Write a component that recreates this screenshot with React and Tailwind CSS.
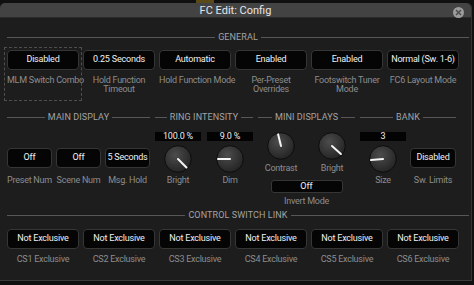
import React from "react";

const lbl = "text-[9px] leading-[9px] text-[#8d8d8d] text-center whitespace-nowrap tracking-[-0.25px]";
const btn =
    "h-[20px] flex items-center justify-center rounded-[4px] bg-[#050505] border border-[#363636] text-[9px] text-[#f2f2f2] whitespace-nowrap tracking-[-0.2px]";

const Header = ({ title, className = "" }) => (
    <div className={"flex items-center gap-[3px] h-[10px] " + className}>
        <div className="flex-1 h-px bg-[#575757]" />
        <span className="text-[9px] leading-[10px] text-[#a3a3a3] tracking-[0.1px]">{title}</span>
        <div className="flex-1 h-px bg-[#575757]" />
    </div>
);

const Knob = ({ angle }) => {
    const a = (angle * Math.PI) / 180;
    const x2 = 14 + Math.sin(a) * 12;
    const y2 = 14 - Math.cos(a) * 12;
    return (
        <svg width="28" height="28" viewBox="0 0 28 28">
            <defs>
                <radialGradient id="kg" cx="40%" cy="35%" r="70%">
                    <stop offset="0%" stopColor="#4c4c4c" />
                    <stop offset="100%" stopColor="#222" />
                </radialGradient>
            </defs>
            <circle cx="14" cy="14" r="13.3" fill="url(#kg)" stroke="#0d0d0d" strokeWidth="1" />
            <line x1="14" y1="14" x2={x2} y2={y2} stroke="#f4f4f4" strokeWidth="2" strokeLinecap="round" />
        </svg>
    );
};

const Value = ({ v }) => (
    <div className="h-[9px] w-full bg-[#030303] text-[9px] leading-[9px] text-[#f0f0f0] text-center tracking-[-0.2px]">{v}</div>
);

const KnobCol = ({ value, angle, label }) => (
    <div className="flex flex-col items-center w-[46px]">
        {value !== undefined && <Value v={value} />}
        <div className={value !== undefined ? "mt-[4px]" : ""}>
            <Knob angle={angle} />
        </div>
        <div className={lbl + (value !== undefined ? " mt-[3px]" : " mt-[4px]")}>{label}</div>
    </div>
);

const general = [
    ["Disabled", ["MLM Switch Combo"]],
    ["0.25 Seconds", ["Hold Function", "Timeout"]],
    ["Automatic", ["Hold Function Mode"]],
    ["Enabled", ["Per-Preset", "Overrides"]],
    ["Enabled", ["Footswitch Tuner", "Mode"]],
    ["Normal (Sw. 1-6)", ["FC6 Layout Mode"]],
];

const App = () => {
    return (
        <div className="w-[474px] h-[285px] bg-[#101010] overflow-hidden font-[family-name:Roboto,sans-serif]">
            <div className="h-[3px] flex">
                <div className="ml-[196px] w-[18px] bg-[#5a4a1a]" />
            </div>
            <div className="w-[472px] h-[277px] flex flex-col bg-[#1d1d1d] rounded-t-[5px] border-r border-[#333]">
                <div className="h-[15px] relative flex items-center justify-center bg-[#434343] rounded-t-[5px] border-b border-[#2a2a2a]">
                    <span className="text-[11px] text-[#e6e6e6] leading-[15px]">FC Edit: Config</span>
                    <div className="absolute right-[7px] top-[4px] w-[11px] h-[11px] rounded-full bg-[#9c9c9c] flex items-center justify-center">
                        <svg width="7" height="7" viewBox="0 0 7 7">
                            <path d="M1 1L6 6M6 1L1 6" stroke="#4a4a4a" strokeWidth="1.4" />
                        </svg>
                    </div>
                </div>

                <div className="px-[7px] pt-[14px]">
                    <Header title="GENERAL" className="mr-[-5px]" />
                    <div className="grid grid-cols-6 gap-[4px] mt-[8px] w-[452px]">
                        {general.map(([v, l], i) => (
                            <div
                                key={i}
                                className={
                                    "flex flex-col h-[48px] " +
                                    (i === 0 ? "outline outline-1 outline-dashed outline-[#4e4e4e] outline-offset-[2px]" : "")
                                }
                            >
                                <div className={btn}>{v}</div>
                                <div className="mt-[6px] flex flex-col">
                                    {l.map((t, j) => (
                                        <div key={j} className={lbl}>
                                            {t}
                                        </div>
                                    ))}
                                </div>
                            </div>
                        ))}
                    </div>

                    <div className="flex gap-[5px] mt-[14px] h-[98px]">
                        <div className="w-[143px] flex flex-col">
                            <Header title="MAIN DISPLAY" />
                            <div className="flex gap-[4px] mt-[26px]">
                                {[
                                    ["Off", "Preset Num"],
                                    ["Off", "Scene Num"],
                                    ["5 Seconds", "Msg. Hold"],
                                ].map(([v, l], i) => (
                                    <div key={i} className="flex-1 flex flex-col">
                                        <div className={btn}>{v}</div>
                                        <div className={lbl + " mt-[8px]"}>{l}</div>
                                    </div>
                                ))}
                            </div>
                        </div>

                        <div className="w-[98px] flex flex-col">
                            <Header title="RING INTENSITY" />
                            <div className="flex gap-[6px] mt-[10px]">
                                <KnobCol value="100.0 %" angle={135} label="Bright" />
                                <KnobCol value="9.0 %" angle={270} label="Dim" />
                            </div>
                        </div>

                        <div className="w-[97px] flex flex-col">
                            <Header title="MINI DISPLAYS" />
                            <div className="flex gap-[5px] mt-[10px]">
                                <KnobCol angle={-14} label="Contrast" />
                                <KnobCol angle={132} label="Bright" />
                            </div>
                            <div className="flex flex-col items-center mt-[7px]">
                                <div className="w-[72px] h-[13px] rounded-[3px] bg-[#050505] border border-[#363636] text-[9px] leading-[11px] text-[#f2f2f2] text-center">
                                    Off
                                </div>
                                <div className={lbl + " mt-[4px]"}>Invert Mode</div>
                            </div>
                        </div>

                        <div className="w-[96px] flex flex-col">
                            <Header title="BANK" />
                            <div className="flex gap-[4px] mt-[10px]">
                                <KnobCol value="3" angle={265} label="Size" />
                                <div className="w-[46px] flex flex-col mt-[16px]">
                                    <div className={btn}>Disabled</div>
                                    <div className={lbl + " mt-[8px]"}>Sw. Limits</div>
                                </div>
                            </div>
                        </div>
                    </div>

                    <Header title="CONTROL SWITCH LINK" className="mr-[-5px]" />
                    <div className="grid grid-cols-6 gap-[4px] mt-[9px] w-[452px]">
                        {[1, 2, 3, 4, 5, 6].map((n) => (
                            <div key={n} className="flex flex-col">
                                <div className={btn}>Not Exclusive</div>
                                <div className={lbl + " mt-[6px]"}>{"CS" + n + " Exclusive"}</div>
                            </div>
                        ))}
                    </div>
                </div>
            </div>
            <div className="h-px w-[472px] bg-[#3c3c3c]" />
        </div>
    );
};

export default App;
